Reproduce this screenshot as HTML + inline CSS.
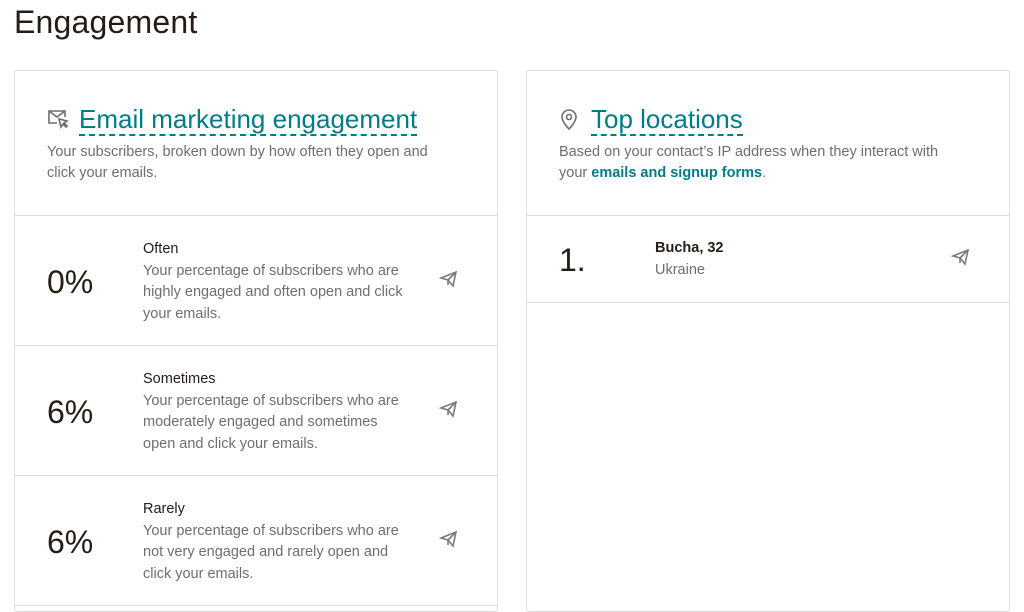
<!DOCTYPE html>
<html><head><style>
body{margin:0;width:1024px;height:586px;overflow:hidden;background:#fff;font-family:"Liberation Sans",sans-serif;color:#241c15;position:relative}
h1{position:absolute;left:14px;top:4px;margin:0;font-weight:400;font-size:32px;letter-spacing:0.2px}
.card{position:absolute;top:70px;border:1px solid #dcdcdc;border-radius:3px;height:540px;background:#fff}
.hd{height:144px;border-bottom:1px solid #dcdcdc;position:relative}
.ht{position:absolute;left:64px;top:33px;font-size:26px;color:#007c89;border-bottom:2px dashed #007c89;line-height:30px}
.ic{position:absolute;left:32px;top:38px}
.ds{position:absolute;left:32px;top:71px;font-size:14.5px;line-height:21px;color:#6e6e6e;width:405px}
.row{height:129px;border-bottom:1px solid #dcdcdc;position:relative}
.pc{position:absolute;left:32px;top:48px;font-size:32px}
.rt{position:absolute;left:128px;top:23px;font-size:14.5px;line-height:21.5px;color:#6e6e6e;width:268px}
.rt b{color:#241c15;font-weight:400;display:block}
.pl{position:absolute;left:424px;top:54px}
a{color:#007c89;text-decoration:none;font-weight:bold}
</style></head><body>
<h1>Engagement</h1>
<div class="card" style="left:14px;width:482px">
 <div class="hd">
  <svg class="ic" width="22" height="20" viewBox="0 0 22 20" fill="none" stroke="#6e6e6e" stroke-width="1.6"><path d="M10 14H2V2h16v6"/><path d="M2 2l8 6 8-6"/><path d="M12 10l2 8 2-3 3 3 1-1-3-3 3-2z"/></svg>
  <div class="ht">Email marketing engagement</div>
  <div class="ds">Your subscribers, broken down by how often they open and click your emails.</div>
 </div>
 <div class="row"><div class="pc">0%</div><div class="rt"><b>Often</b>Your percentage of subscribers who are highly engaged and often open and click your emails.</div><svg class="pl" width="20" height="18" viewBox="0 0 20 18" fill="none" stroke="#7a7a7a" stroke-width="1.6"><path d="M2 8L17 2 14 16 9 10z"/><path d="M9 10l8-8M9 10v5"/></svg></div>
 <div class="row"><div class="pc">6%</div><div class="rt"><b>Sometimes</b>Your percentage of subscribers who are moderately engaged and sometimes open and click your emails.</div><svg class="pl" width="20" height="18" viewBox="0 0 20 18" fill="none" stroke="#7a7a7a" stroke-width="1.6"><path d="M2 8L17 2 14 16 9 10z"/><path d="M9 10l8-8M9 10v5"/></svg></div>
 <div class="row"><div class="pc">6%</div><div class="rt"><b>Rarely</b>Your percentage of subscribers who are not very engaged and rarely open and click your emails.</div><svg class="pl" width="20" height="18" viewBox="0 0 20 18" fill="none" stroke="#7a7a7a" stroke-width="1.6"><path d="M2 8L17 2 14 16 9 10z"/><path d="M9 10l8-8M9 10v5"/></svg></div>
</div>
<div class="card" style="left:526px;width:482px">
 <div class="hd">
  <svg class="ic" width="20" height="22" viewBox="0 0 20 22" fill="none" stroke="#6e6e6e" stroke-width="1.6"><path d="M10 20s-7-7-7-12a7 7 0 0114 0c0 5-7 12-7 12z"/><circle cx="10" cy="8" r="2.5"/></svg>
  <div class="ht">Top locations</div>
  <div class="ds">Based on your contact’s IP address when they interact with your <a>emails and signup forms</a>.</div>
 </div>
 <div class="row" style="height:86px"><div class="pc" style="top:26px">1.</div><div class="rt" style="top:22px"><b style="font-weight:bold">Bucha, 32</b>Ukraine</div><svg class="pl" style="top:32px" width="20" height="18" viewBox="0 0 20 18" fill="none" stroke="#7a7a7a" stroke-width="1.6"><path d="M2 8L17 2 14 16 9 10z"/><path d="M9 10l8-8M9 10v5"/></svg></div>
</div>
</body></html>
